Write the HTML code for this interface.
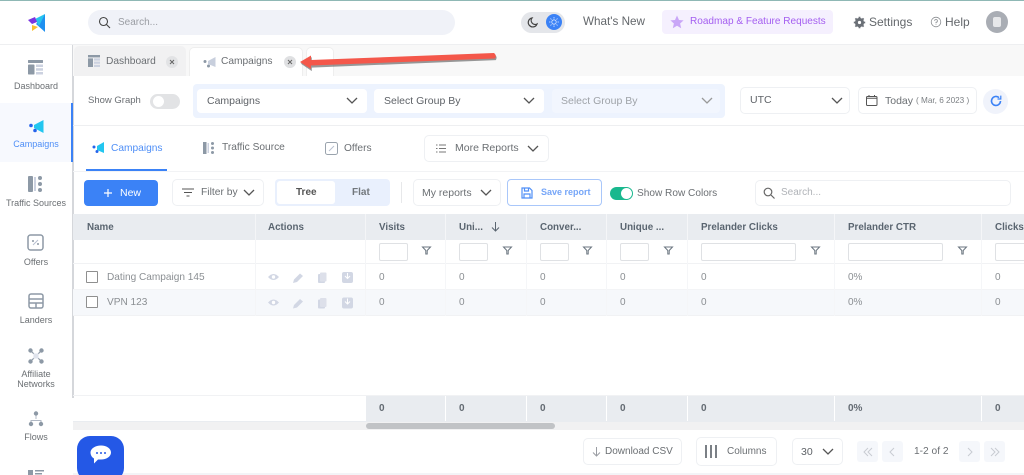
<!DOCTYPE html>
<html><head><meta charset="utf-8"><style>
html,body{margin:0;padding:0;width:1024px;height:475px;overflow:hidden;background:#fff}
body{font-family:"Liberation Sans",sans-serif;color:#5f6368;position:relative;filter:blur(.35px)}
.a{position:absolute;box-sizing:border-box}
.t{position:absolute;white-space:nowrap;line-height:14px;font-size:10.5px}
.c{text-align:center;width:72px;left:0;font-size:9px;line-height:10px;color:#6b6f73}
.box{position:absolute;box-sizing:border-box;background:#fff;border:1px solid #eef0f3;border-radius:5px}
.th{position:absolute;top:221px;font-weight:bold;font-size:9.8px;line-height:14px;color:#5a6570;white-space:nowrap}
.vl{position:absolute;width:1px}
.inp{position:absolute;top:243px;height:18px;box-sizing:border-box;border:1px solid #dfe1e4;border-radius:2px;background:#fff}
.cell{position:absolute;font-size:10px;line-height:14px;color:#8b8f93;white-space:nowrap}
.f{position:absolute;top:246px}
svg{position:absolute;overflow:visible}
</style></head><body>
<div class="a" style="left:0;top:0;width:1024px;height:1px;background:#8fb8b5"></div>
<!-- header -->
<div class="a" style="left:0;top:44px;width:1024px;height:1px;background:#eeeff1"></div>
<svg style="left:27px;top:12px" width="20" height="22" viewBox="0 0 20 22"><path d="M18 2V20L9 12Z" fill="#1e90f0"/><path d="M18 2L8 7 12 14Z" fill="#26c4ee"/><path d="M1 8L8 5 10 10 5 12Z" fill="#7b35e0"/><path d="M5 13L11 15 5 19Z" fill="#fbc02d"/></svg>
<div class="a" style="left:88px;top:10px;width:367px;height:25px;border-radius:13px;background:#f0f2f8"></div>
<svg style="left:98px;top:16px" width="13" height="13" viewBox="0 0 13 13" fill="none" stroke="#444" stroke-width="1.1"><circle cx="5.500" cy="5.500" r="4"/><path d="M8.500 8.500L12 12"/></svg>
<div class="t" style="left:118px;top:16px;color:#9a9da3;font-size:10px">Search...</div>
<div class="a" style="left:521px;top:12px;width:44px;height:21px;border-radius:11px;background:#e4e6ea"></div>
<svg style="left:527px;top:17px" width="11" height="11" viewBox="0 0 11 11"><path d="M5 1A4.500 4.500 0 1 0 10 7 4 4 0 0 1 5 1Z" fill="none" stroke="#444" stroke-width="1.2"/></svg>
<div class="a" style="left:546px;top:14px;width:16px;height:16px;border-radius:8px;background:#3b82f6"></div>
<svg style="left:549px;top:17px" width="10" height="10" viewBox="0 0 10 10" fill="none" stroke="#dbe8ff" stroke-width=".8"><circle cx="5" cy="5" r="2.200"/><path d="M5 0V1.500M5 8.500V10M0 5H1.500M8.500 5H10M1.500 1.500L2.500 2.500M7.500 7.500L8.500 8.500M1.500 8.500L2.500 7.500M7.500 2.500L8.500 1.500"/></svg>
<div class="t" style="left:583px;top:15px;font-size:11.700px;color:#63676b">What's New</div>
<div class="a" style="left:662px;top:10px;width:171px;height:24px;border-radius:4px;background:#f5f0fe"></div>
<svg style="left:670px;top:15px" width="14" height="14" viewBox="0 0 14 14"><path d="M7 0.500L9 5 13.600 5.400 10.100 8.500 11.200 13.200 7 10.700 2.800 13.200 3.900 8.500 .4 5.400 5 5Z" fill="#c9a6f7"/></svg>
<div class="t" style="left:690px;top:15px;font-size:10.050px;color:#a45ef0">Roadmap &amp; Feature Requests</div>
<svg style="left:853px;top:16px" width="13" height="13" viewBox="0 0 13 13"><circle cx="6.500" cy="6.500" r="3.400" fill="none" stroke="#6b7077" stroke-width="2.400"/><path d="M6.500 .8V12.200M.8 6.500H12.200M2.400 2.400L10.600 10.600M2.400 10.600L10.600 2.400" stroke="#6b7077" stroke-width="1.800"/><circle cx="6.500" cy="6.500" r="1.600" fill="#fff"/></svg>
<div class="t" style="left:869px;top:15px;font-size:12px;color:#63676b">Settings</div>
<svg style="left:930px;top:16px" width="12" height="12" viewBox="0 0 12 12" fill="none" stroke="#8a8d91" stroke-width=".8"><circle cx="6" cy="6" r="4.800"/><path d="M4.600 4.800A1.400 1.400 0 1 1 6 6.300V7.200M6 8.400V9"/></svg>
<div class="t" style="left:945px;top:15px;font-size:12px;color:#63676b">Help</div>
<div class="a" style="left:986px;top:11px;width:22px;height:22px;border-radius:11px;background:#a9adb4"></div>
<div class="a" style="left:993px;top:17px;width:8px;height:10px;border-radius:2px;background:#e6e7e9"></div>
<!-- sidebar -->
<div class="a" style="left:72px;top:45px;width:1.500px;height:353px;background:#d5d7db"></div>
<div class="a" style="left:0;top:103px;width:72px;height:59px;background:#f7f9fe"></div>
<div class="a" style="left:70.500px;top:103px;width:2px;height:59px;background:#3b82f6"></div>
<svg style="left:28px;top:60px" width="16" height="16" viewBox="0 0 16 16" fill="#8d99a6"><rect width="15" height="3" rx=".5"/><rect y="4.500" width="6.500" height="10" rx=".8"/><rect x="8" y="4.500" width="7" height="2.500" fill="#ccd2e0"/><rect x="8" y="8.200" width="7" height="2.500" fill="#ccd2e0"/><rect x="8" y="12" width="7" height="2.500" fill="#ccd2e0"/></svg>
<div class="t c" style="top:81px">Dashboard</div>
<svg style="left:28px;top:119px" width="17" height="15" viewBox="0 0 17 15"><path d="M15.500 1V14L6 9V6Z" fill="#22c6f0"/><circle cx="3" cy="6.500" r="1.800" fill="#2563eb"/><circle cx="7" cy="11.500" r="1.800" fill="#2563eb"/></svg>
<div class="t c" style="top:139px;color:#4f8ff7">Campaigns</div>
<svg style="left:28px;top:176px" width="16" height="16" viewBox="0 0 16 16" fill="#8d99a6"><rect width="5" height="16" rx="1"/><rect x="6" y="1" width="2" height="14" fill="#ccd2e0"/><circle cx="12" cy="2" r="2"/><circle cx="12" cy="8" r="2"/><circle cx="12" cy="14" r="2"/></svg>
<div class="t c" style="top:198px">Traffic Sources</div>
<svg style="left:27px;top:234px" width="18" height="18" viewBox="0 0 18 18" fill="none"><rect x="1" y="1" width="15" height="15" rx="2.500" stroke="#8d99a6" stroke-width="1.500"/><path d="M6 11L11 6" stroke="#b8c0d0"/><circle cx="6" cy="7" r="1" fill="#8d99a6"/><circle cx="11" cy="10" r="1" fill="#8d99a6"/></svg>
<div class="t c" style="top:257px">Offers</div>
<svg style="left:28px;top:293px" width="16" height="16" viewBox="0 0 16 16" fill="none" stroke="#8d99a6" stroke-width="1.500"><rect x="1" y="1" width="14" height="14" rx="2"/><path d="M1 6H15M1 10H15M8 10V15"/></svg>
<div class="t c" style="top:315px">Landers</div>
<svg style="left:28px;top:348px" width="16" height="16" viewBox="0 0 16 16"><path d="M2 2L14 14M14 2L2 14" stroke="#8d99a6" stroke-width="1.200"/><circle cx="2.500" cy="2.500" r="2.200" fill="#8d99a6"/><circle cx="13.500" cy="2.500" r="2.200" fill="#8d99a6"/><circle cx="2.500" cy="13.500" r="2.200" fill="#8d99a6"/><circle cx="13.500" cy="13.500" r="2.200" fill="#8d99a6"/><rect x="5.500" y="5.500" width="5" height="5" fill="#dfe3ec"/></svg>
<div class="t c" style="top:370px;line-height:9.500px">Affiliate<br>Networks</div>
<svg style="left:28px;top:411px" width="16" height="16" viewBox="0 0 16 16"><path d="M8 3V8M3 13V9.500H13V13" fill="none" stroke="#b0b8c4"/><circle cx="8" cy="2.500" r="2.200" fill="#8d99a6"/><circle cx="3" cy="13" r="2.200" fill="#8d99a6"/><circle cx="13" cy="13" r="2.200" fill="#8d99a6"/></svg>
<div class="t c" style="top:432px">Flows</div>
<svg style="left:28px;top:470px" width="16" height="6" viewBox="0 0 16 6" fill="#8d99a6"><rect width="5" height="5"/><rect x="7" width="9" height="1.500"/><rect x="7" y="3" width="7" height="1.500"/></svg>
<!-- tabs -->
<div class="a" style="left:73px;top:45px;width:951px;height:31px;background:#f8f8f8"></div>
<div class="a" style="left:74px;top:46px;width:112px;height:30px;background:#f1f1f2;border-radius:5px 5px 0 0"></div>
<svg style="left:88px;top:55px" width="12" height="12" viewBox="0 0 12 12" fill="#8d99a6"><rect width="12" height="2.400"/><rect y="3.400" width="5" height="8.600"/><rect x="6" y="3.400" width="6" height="2.200" fill="#ccd2e0"/><rect x="6" y="6.600" width="6" height="2.200" fill="#ccd2e0"/><rect x="6" y="9.800" width="6" height="2.200" fill="#ccd2e0"/></svg>
<div class="t" style="left:106px;top:55px;font-size:10.200px;color:#6b6f73">Dashboard</div>
<div class="a" style="left:166px;top:56px;width:12px;height:12px;border-radius:6px;background:#e2e3e5"></div>
<svg style="left:169px;top:59px" width="6" height="6" viewBox="0 0 6 6"><path d="M1 1L5 5M5 1L1 5" stroke="#666" stroke-width="1"/></svg>
<div class="a" style="left:189px;top:47px;width:114px;height:29px;background:#fff;border:1px solid #eee;border-bottom:0;border-radius:5px 5px 0 0"></div>
<svg style="left:203px;top:57px" width="13" height="11" viewBox="0 0 13 11"><path d="M12.500 0V10L5 7V4Z" fill="#c8cfdd"/><circle cx="2" cy="4.500" r="1.500" fill="#8d99a6"/><circle cx="5.500" cy="9" r="1.500" fill="#8d99a6"/></svg>
<div class="t" style="left:221px;top:55px;font-size:10.200px;color:#6b6f73">Campaigns</div>
<div class="a" style="left:284px;top:56px;width:12px;height:12px;border-radius:6px;background:#dfe0e2"></div>
<svg style="left:287px;top:59px" width="6" height="6" viewBox="0 0 6 6"><path d="M1 1L5 5M5 1L1 5" stroke="#666" stroke-width="1"/></svg>
<div class="a" style="left:306px;top:47px;width:28px;height:29px;background:#fff;border:1px solid #eee;border-bottom:0;border-radius:5px 5px 0 0"></div>
<svg style="left:0;top:0" width="1024" height="475"><path d="M300 62L311 55.500 311 60 494 53Q497 55.500 495 58.500L311 66 311 69.500Z" fill="#555" opacity=".6" transform="translate(.8 1.600)"/><path d="M300 62L311 55.500 311 60 494 53Q497 55.500 495 58.500L311 65.500 311 69Z" fill="#f4574a"/></svg>
<!-- filter row -->
<div class="a" style="left:73px;top:125px;width:951px;height:1px;background:#eeeff1"></div>
<div class="t" style="left:88px;top:94px;font-size:9.500px;color:#6b6f73">Show Graph</div>
<div class="a" style="left:150px;top:94px;width:30px;height:15px;border-radius:8px;background:#e2e3e5"></div>
<div class="a" style="left:153px;top:96px;width:11px;height:11px;border-radius:6px;background:#fff"></div>
<div class="a" style="left:193px;top:84px;width:532px;height:34px;border-radius:4px;background:#edf3fe"></div>
<div class="a" style="left:197px;top:89px;width:170px;height:24px;border-radius:4px;background:#fff"></div>
<div class="t" style="left:207px;top:94px;font-size:10.500px;color:#5f6368">Campaigns</div>
<div class="a" style="left:374px;top:89px;width:170px;height:24px;border-radius:4px;background:#fff"></div>
<div class="t" style="left:384px;top:94px;font-size:10.500px;color:#5f6368">Select Group By</div>
<div class="a" style="left:552px;top:89px;width:168px;height:24px;border-radius:4px;background:#f2f6fe"></div>
<div class="t" style="left:561px;top:94px;font-size:10.500px;color:#9fa3a8">Select Group By</div>
<div class="box" style="left:740px;top:87px;width:110px;height:27px"></div>
<div class="t" style="left:750px;top:93px;font-size:10.500px">UTC</div>
<div class="box" style="left:858px;top:87px;width:119px;height:27px"></div>
<svg style="left:866px;top:95px" width="12" height="11" viewBox="0 0 12 11" fill="none" stroke="#555" stroke-width="1"><rect x=".5" y="1.500" width="10.500" height="9" rx="1"/><path d="M.5 3.200H11M3 0V2M8.500 0V2"/></svg>
<div class="t" style="left:885px;top:94px;font-size:10.500px;color:#6b6f73">Today</div>
<div class="t" style="left:916px;top:94px;font-size:8.200px;color:#7b7f83">( Mar, 6 2023 )</div>
<div class="a" style="left:983px;top:89px;width:25px;height:25px;border-radius:13px;background:#f0f3fb"></div>
<svg style="left:990px;top:95px" width="12" height="12" viewBox="0 0 12 12" fill="none" stroke="#3b82f6" stroke-width="1.600"><path d="M10.500 6A4.500 4.500 0 1 1 9 2.600"/><path d="M10.800 .6V4H7.500" stroke-width="1.200"/></svg>
<!-- report tabs -->
<svg style="left:92px;top:142px" width="13" height="12" viewBox="0 0 13 12"><path d="M12 0V11L5 8V4Z" fill="#22c6f0"/><circle cx="2" cy="5" r="1.500" fill="#2563eb"/><circle cx="5" cy="9.500" r="1.500" fill="#2563eb"/></svg>
<div class="t" style="left:111px;top:142px;font-size:10.200px;color:#4f8ff7">Campaigns</div>
<div class="a" style="left:86px;top:169px;width:81px;height:2px;background:#3b82f6"></div>
<svg style="left:203px;top:142px" width="12" height="12" viewBox="0 0 12 12" fill="#8d99a6"><rect width="3.500" height="12"/><rect x="4.500" y="1" width="1.500" height="10" fill="#ccd2e0"/><circle cx="9.500" cy="1.500" r="1.500"/><circle cx="9.500" cy="6" r="1.500"/><circle cx="9.500" cy="10.500" r="1.500"/></svg>
<div class="t" style="left:222px;top:141px;font-size:10.200px;color:#6b6f73">Traffic Source</div>
<svg style="left:325px;top:142px" width="13" height="13" viewBox="0 0 13 13" fill="none"><rect x=".5" y=".5" width="12" height="12" rx="2" stroke="#9aa3ad"/><path d="M4 9L9 4" stroke="#b8c0d0"/></svg>
<div class="t" style="left:344px;top:142px;font-size:10.200px;color:#6b6f73">Offers</div>
<div class="box" style="left:424px;top:135px;width:125px;height:27px"></div>
<svg style="left:436px;top:144px" width="10" height="9" viewBox="0 0 10 9" stroke="#777" stroke-width="1"><path d="M3 1H10M3 4.500H10M3 8H10M0 1H1.500M0 4.500H1.500M0 8H1.500"/></svg>
<div class="t" style="left:455px;top:141px;font-size:10.500px;color:#6b6f73">More Reports</div>
<div class="a" style="left:73px;top:171px;width:951px;height:1px;background:#f2f3f5"></div>
<!-- toolbar -->
<div class="a" style="left:84px;top:180px;width:74px;height:26px;border-radius:4px;background:#3b82f6"></div>
<svg style="left:103px;top:188px" width="10" height="10" viewBox="0 0 10 10" stroke="#fff" stroke-width="1.200"><path d="M5 1V9M1 5H9"/></svg>
<div class="t" style="left:120px;top:186px;font-size:10.500px;color:#fff">New</div>
<div class="box" style="left:172px;top:179px;width:92px;height:27px"></div>
<svg style="left:182px;top:188px" width="12" height="9" viewBox="0 0 12 9" stroke="#555" stroke-width="1"><path d="M0 1H12M2 4.500H10M4.500 8H7.500"/></svg>
<div class="t" style="left:201px;top:186px;font-size:10.300px;color:#6b6f73">Filter by</div>
<div class="a" style="left:275px;top:179px;width:115px;height:27px;border-radius:4px;background:#e9f0fd"></div>
<div class="a" style="left:277px;top:181px;width:58px;height:23px;border-radius:3px;background:#fff"></div>
<div class="t" style="left:296px;top:186px;font-size:10px;font-weight:bold;color:#555">Tree</div>
<div class="t" style="left:352px;top:186px;font-size:10px;font-weight:bold;color:#72777c">Flat</div>
<div class="a" style="left:401px;top:182px;width:1px;height:21px;background:#e7e8ea"></div>
<div class="box" style="left:413px;top:179px;width:88px;height:27px"></div>
<div class="t" style="left:422px;top:186px;font-size:10.500px;color:#6b6f73">My reports</div>
<div class="a" style="left:507px;top:179px;width:95px;height:27px;border-radius:4px;background:#fff;border:1px solid #a9c7fa"></div>
<svg style="left:521px;top:187px" width="12" height="12" viewBox="0 0 12 12" fill="none" stroke="#4f8ff7" stroke-width="1.200"><path d="M1 1H8.500L11 3.500V11H1Z"/><path d="M3.500 1V4H7.500V1M3 11V7H9V11"/></svg>
<div class="t" style="left:541px;top:185px;font-size:9px;font-weight:bold;color:#76a6f8">Save report</div>
<div class="a" style="left:610px;top:187px;width:23px;height:13px;border-radius:7px;background:#19b88e"></div>
<div class="a" style="left:621px;top:188px;width:11px;height:11px;border-radius:6px;background:#fff"></div>
<div class="t" style="left:637px;top:187px;font-size:10.100px;color:#6b6f73">Show Row Colors</div>
<div class="box" style="left:755px;top:180px;width:256px;height:26px"></div>
<svg style="left:763px;top:187px" width="12" height="12" viewBox="0 0 12 12" fill="none" stroke="#666" stroke-width="1.200"><circle cx="5" cy="5" r="3.800"/><path d="M8 8L11.500 11.500"/></svg>
<div class="t" style="left:781px;top:186px;font-size:10px;color:#b0b3b8">Search...</div>
<!-- table -->
<div class="a" style="left:73px;top:214px;width:951px;height:26px;background:#e9ecf0"></div>
<div class="a" style="left:73px;top:290px;width:951px;height:26px;background:#f6f8fb"></div>
<div class="a" style="left:73px;top:263px;width:951px;height:1px;background:#f1f2f4"></div>
<div class="a" style="left:73px;top:289px;width:951px;height:1px;background:#f3f4f6"></div>
<div class="a" style="left:73px;top:315px;width:951px;height:1px;background:#f1f2f4"></div>
<div class="a" style="left:73px;top:395px;width:951px;height:1px;background:#f1f2f4"></div>
<div class="a" style="left:366px;top:396px;width:658px;height:25px;background:#e9ecf0"></div>
<div class="a" style="left:73px;top:421px;width:951px;height:1px;background:#e9ecf0"></div>
<div class="a" style="left:73px;top:422px;width:951px;height:8px;background:#f1f1f2"></div>
<div class="a" style="left:366px;top:423px;width:189px;height:6px;border-radius:3px;background:#c1c3c6"></div>
<div class="vl" style="left:255px;top:214px;height:102px;background:#f4f5f7"></div>
<div class="vl" style="left:365px;top:214px;height:102px;background:#f4f5f7"></div>
<div class="vl" style="left:445px;top:214px;height:102px;background:#f5f6f8"></div>
<div class="vl" style="left:526px;top:214px;height:102px;background:#f5f6f8"></div>
<div class="vl" style="left:606px;top:214px;height:102px;background:#f5f6f8"></div>
<div class="vl" style="left:687px;top:214px;height:102px;background:#f5f6f8"></div>
<div class="vl" style="left:834px;top:214px;height:102px;background:#f5f6f8"></div>
<div class="vl" style="left:981px;top:214px;height:102px;background:#f5f6f8"></div>
<div class="vl" style="left:365px;top:396px;height:25px;background:#fff"></div>
<div class="vl" style="left:445px;top:396px;height:25px;background:#fff"></div>
<div class="vl" style="left:526px;top:396px;height:25px;background:#fff"></div>
<div class="vl" style="left:606px;top:396px;height:25px;background:#fff"></div>
<div class="vl" style="left:687px;top:396px;height:25px;background:#fff"></div>
<div class="vl" style="left:834px;top:396px;height:25px;background:#fff"></div>
<div class="vl" style="left:981px;top:396px;height:25px;background:#fff"></div>
<div class="th" style="left:87px">Name</div>
<div class="th" style="left:268px">Actions</div>
<div class="th" style="left:379px">Visits</div>
<div class="th" style="left:459px">Uni...</div>
<svg style="left:491px;top:222px" width="9" height="10" viewBox="0 0 9 10" fill="none" stroke="#5a6570" stroke-width="1"><path d="M4.500 0V9M1 5.500L4.500 9 8 5.500"/></svg>
<div class="th" style="left:540px">Conver...</div>
<div class="th" style="left:620px">Unique ...</div>
<div class="th" style="left:701px">Prelander Clicks</div>
<div class="th" style="left:848px">Prelander CTR</div>
<div class="th" style="left:995px">Clicks</div>
<div class="inp" style="left:379px;width:29px"></div>
<div class="inp" style="left:459px;width:29px"></div>
<div class="inp" style="left:540px;width:29px"></div>
<div class="inp" style="left:620px;width:29px"></div>
<div class="inp" style="left:701px;width:95px"></div>
<div class="inp" style="left:848px;width:95px"></div>
<div class="inp" style="left:995px;width:40px"></div>
<svg class="f" style="left:422px" width="9" height="9" viewBox="0 0 9 9"><path d="M.5 1H8.500L5.200 4.500V8H3.800V4.500Z" fill="none" stroke="#6b7680"/></svg>
<svg class="f" style="left:503px" width="9" height="9" viewBox="0 0 9 9"><path d="M.5 1H8.500L5.200 4.500V8H3.800V4.500Z" fill="none" stroke="#6b7680"/></svg>
<svg class="f" style="left:583px" width="9" height="9" viewBox="0 0 9 9"><path d="M.5 1H8.500L5.200 4.500V8H3.800V4.500Z" fill="none" stroke="#6b7680"/></svg>
<svg class="f" style="left:664px" width="9" height="9" viewBox="0 0 9 9"><path d="M.5 1H8.500L5.200 4.500V8H3.800V4.500Z" fill="none" stroke="#6b7680"/></svg>
<svg class="f" style="left:811px" width="9" height="9" viewBox="0 0 9 9"><path d="M.5 1H8.500L5.200 4.500V8H3.800V4.500Z" fill="none" stroke="#6b7680"/></svg>
<svg class="f" style="left:958px" width="9" height="9" viewBox="0 0 9 9"><path d="M.5 1H8.500L5.200 4.500V8H3.800V4.500Z" fill="none" stroke="#6b7680"/></svg>
<div class="a" style="left:86px;top:271px;width:12px;height:12px;border:1.300px solid #8f8f8f;border-radius:1px"></div>
<div class="a" style="left:86px;top:296px;width:12px;height:12px;border:1.300px solid #8f8f8f;border-radius:1px;background:#fff"></div>
<div class="cell" style="left:107px;top:271px;font-size:10.100px">Dating Campaign 145</div>
<div class="cell" style="left:107px;top:296px;font-size:10.100px">VPN 123</div>
<svg style="left:0;top:0" width="1024" height="475" fill="#d2d7e4">
<g><path d="M268 277Q273.500 271 279 277 273.500 283 268 277Z"/><circle cx="273.500" cy="277" r="1.700" fill="#fff"/><path d="M293 283L294 279.500 300 273.500 303 276 297 282Z"/><rect x="318" y="274" width="7" height="9" rx="1"/><rect x="320" y="272.500" width="6.500" height="9" rx="1" fill="#dde0ea"/><rect x="342" y="272" width="11" height="11" rx="2"/><path d="M347.500 273V278M345 276L347.500 278.500 350 276" stroke="#fff" fill="none"/></g>
<g><path d="M268 302.500Q273.500 296.500 279 302.500 273.500 308.500 268 302.500Z"/><circle cx="273.500" cy="302.500" r="1.700" fill="#fff"/><path d="M293 308.500L294 305 300 299 303 301.500 297 307.500Z"/><rect x="318" y="299.500" width="7" height="9" rx="1"/><rect x="320" y="298" width="6.500" height="9" rx="1" fill="#dde0ea"/><rect x="342" y="297.500" width="11" height="11" rx="2"/><path d="M347.500 298.500V303.500M345 301.500L347.500 304 350 301.500" stroke="#fff" fill="none"/></g>
</svg>
<div class="cell" style="left:379px;top:271px">0</div><div class="cell" style="left:459px;top:271px">0</div><div class="cell" style="left:540px;top:271px">0</div><div class="cell" style="left:620px;top:271px">0</div><div class="cell" style="left:701px;top:271px">0</div><div class="cell" style="left:848px;top:271px">0%</div><div class="cell" style="left:995px;top:271px">0</div>
<div class="cell" style="left:379px;top:296px">0</div><div class="cell" style="left:459px;top:296px">0</div><div class="cell" style="left:540px;top:296px">0</div><div class="cell" style="left:620px;top:296px">0</div><div class="cell" style="left:701px;top:296px">0</div><div class="cell" style="left:848px;top:296px">0%</div><div class="cell" style="left:995px;top:296px">0</div>
<div class="cell" style="left:379px;top:402px;font-weight:bold;color:#636a72">0</div><div class="cell" style="left:459px;top:402px;font-weight:bold;color:#636a72">0</div><div class="cell" style="left:540px;top:402px;font-weight:bold;color:#636a72">0</div><div class="cell" style="left:620px;top:402px;font-weight:bold;color:#636a72">0</div><div class="cell" style="left:701px;top:402px;font-weight:bold;color:#636a72">0</div><div class="cell" style="left:848px;top:402px;font-weight:bold;color:#636a72">0%</div><div class="cell" style="left:995px;top:402px;font-weight:bold;color:#636a72">0</div>
<!-- bottom -->
<div class="a" style="left:73px;top:473px;width:951px;height:2px;background:#f3f4f7"></div>
<div class="a" style="left:77px;top:436px;width:47px;height:45px;border-radius:13px;background:#2458e6"></div>
<svg style="left:90px;top:445px" width="22" height="19" viewBox="0 0 22 19"><path d="M11 0.500C16.500 0.500 21 3.500 21 7.500S16.500 14.500 11 14.500H8L4 18.500V13.500C2 12.500 .5 10 .5 7.500.5 3.500 5.500 0.500 11 0.500Z" fill="#fff"/><circle cx="7" cy="8" r="1" fill="#2458e6"/><circle cx="11" cy="8" r="1" fill="#2458e6"/><circle cx="15" cy="8" r="1" fill="#2458e6"/></svg>
<div class="box" style="left:583px;top:438px;width:99px;height:27px"></div>
<svg style="left:592px;top:447px" width="9" height="10" viewBox="0 0 9 10" fill="none" stroke="#9a9da3"><path d="M4.500 0V9M1 5.500L4.500 9 8 5.500"/></svg>
<div class="t" style="left:605px;top:445px;font-size:10px;color:#6b6f73">Download CSV</div>
<div class="box" style="left:696px;top:437px;width:81px;height:29px"></div>
<svg style="left:705px;top:445px" width="13" height="13" viewBox="0 0 13 13" fill="#7b8086"><rect width="2" height="13"/><rect x="5" width="2" height="13"/><rect x="10" width="2" height="13"/></svg>
<div class="t" style="left:727px;top:445px;font-size:10px;color:#6b6f73">Columns</div>
<div class="box" style="left:792px;top:438px;width:51px;height:27px"></div>
<div class="t" style="left:801px;top:445px;font-size:10.500px;color:#5f6368">30</div>
<div class="a" style="left:857px;top:441px;width:21px;height:21px;border-radius:3px;background:#f5f7fb"></div>
<div class="a" style="left:882px;top:441px;width:21px;height:21px;border-radius:3px;background:#f5f7fb"></div>
<div class="a" style="left:959px;top:441px;width:21px;height:21px;border-radius:3px;background:#f5f7fb"></div>
<div class="a" style="left:984px;top:441px;width:21px;height:21px;border-radius:3px;background:#f5f7fb"></div>
<svg style="left:0;top:0" width="1024" height="475" fill="none" stroke="#c8ccd2" stroke-width="1"><path d="M868 448L864 452 868 456M872 448L868 452 872 456M894 448L890 452 894 456M968 448L972 452 968 456M991 448L995 452 991 456M995 448L999 452 995 456"/></svg>
<div class="t" style="left:914px;top:445px;font-size:10.200px;color:#6b6f73">1-2 of 2</div>
<!-- chevrons on top -->
<svg style="left:0;top:0" width="1024" height="475" fill="none" stroke="#555" stroke-width="1.300"><path d="M347 98L352 103 357 98M524 98L529 103 534 98M832 98L837 103 842 98"/><path d="M702 98L707 103 712 98" stroke="#999"/><path d="M528 146L533 151 538 146M244 190L249 195 254 190M481 190L486 195 491 190"/><path d="M823 449L828 454 833 449"/></svg>
</body></html>
